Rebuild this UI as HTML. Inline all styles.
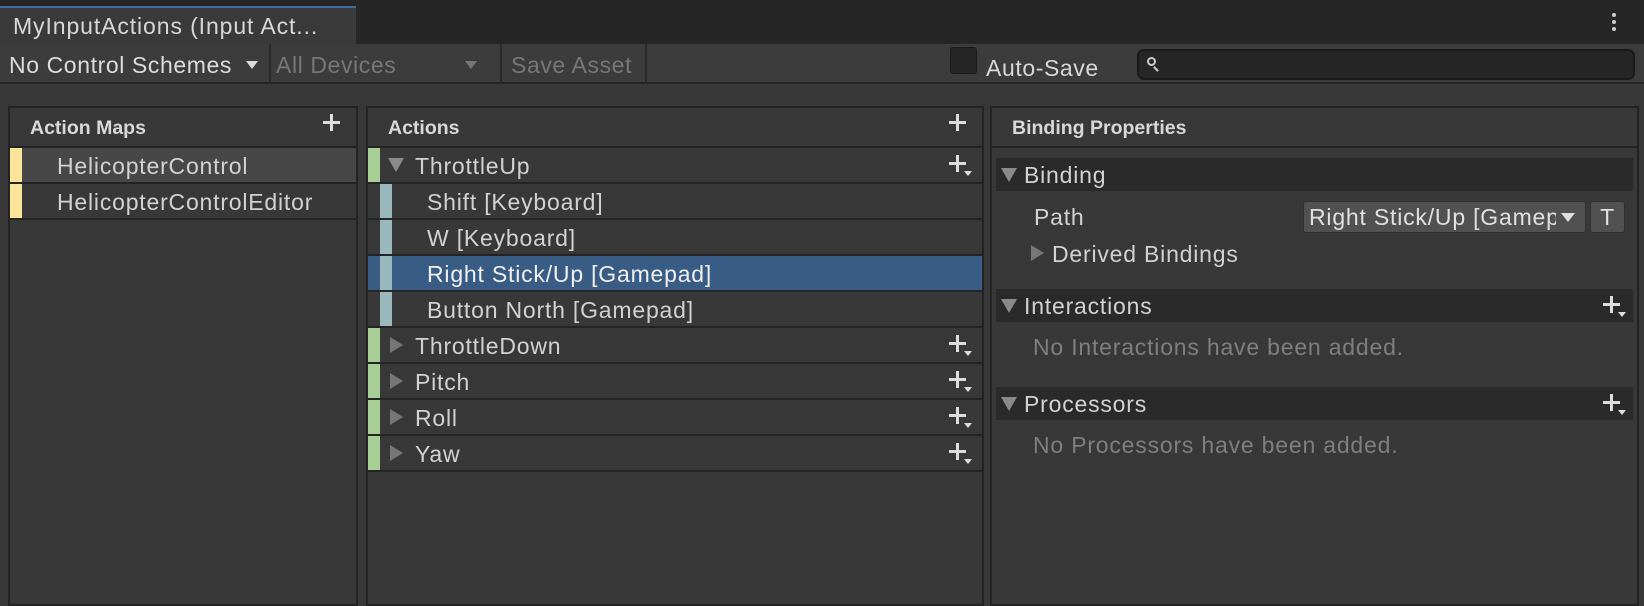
<!DOCTYPE html>
<html><head><style>
*{box-sizing:border-box;margin:0;padding:0}
body{width:1644px;height:596px;background:#383838;font-family:"Liberation Sans",sans-serif;color:#d2d2d2;position:relative;overflow:hidden;font-size:23px;letter-spacing:0.8px}
.a{position:absolute}
.row{position:absolute;height:36px;border-bottom:2px solid #242424;line-height:36px;white-space:nowrap}
.plusd{position:absolute;width:24px;height:24px}
.plusd:before{content:"";position:absolute;left:2px;top:9px;width:17px;height:3px;background:#ddd}
.plusd:after{content:"";position:absolute;left:9px;top:2px;width:3px;height:17px;background:#ddd}
.plusd i{position:absolute;left:17px;top:18px;border-left:4px solid transparent;border-right:4px solid transparent;border-top:5px solid #ddd}
.tri-d{display:inline-block;border-left:8px solid transparent;border-right:8px solid transparent;border-top:14px solid #8a8a8a;vertical-align:middle}
.tri-r{position:absolute;border-top:8px solid transparent;border-bottom:8px solid transparent;border-left:13px solid #777}
.hdr{position:absolute;font-weight:bold;font-size:19.5px;color:#d8d8d8;letter-spacing:0}
.sec{position:absolute;left:996px;width:637px;height:33px;background:#2a2a2a;line-height:35px}
</style></head><body>
<div class="a" style="left:0;top:0;width:1644px;height:44px;background:#262626"></div>
<div class="a" style="left:0;top:6px;width:356px;height:38px;background:#3a3a3a;border-top:2px solid #3c6ea5"></div>
<div class="a" style="left:13px;top:13px;font-size:23px;letter-spacing:0.9px;color:#d8d8d8">MyInputActions (Input Act...</div>
<div class="a" style="left:1612px;top:13px;width:4px;height:4px;background:#ccc;border-radius:2px;box-shadow:0 7px 0 #ccc,0 14px 0 #ccc"></div>
<div class="a" style="left:0;top:44px;width:1644px;height:40px;background:#3c3c3c;border-bottom:2px solid #242424"></div>
<div class="a" style="left:9px;top:52px;font-size:23px;letter-spacing:0.6px;color:#dcdcdc">No Control Schemes</div>
<div class="a" style="left:246px;top:61px;border-left:6px solid transparent;border-right:6px solid transparent;border-top:8px solid #ddd"></div>
<div class="a" style="left:269px;top:44px;width:2px;height:40px;background:#2a2a2a"></div>
<div class="a" style="left:276px;top:52px;font-size:23px;letter-spacing:0.6px;color:#777">All Devices</div>
<div class="a" style="left:465px;top:61px;border-left:6px solid transparent;border-right:6px solid transparent;border-top:8px solid #777"></div>
<div class="a" style="left:500px;top:44px;width:2px;height:40px;background:#2a2a2a"></div>
<div class="a" style="left:511px;top:52px;font-size:23px;letter-spacing:0.6px;color:#777">Save Asset</div>
<div class="a" style="left:645px;top:44px;width:2px;height:40px;background:#2a2a2a"></div>
<div class="a" style="left:950px;top:47px;width:27px;height:27px;background:#262626;border:1px solid #1a1a1a;border-radius:3px"></div>
<div class="a" style="left:986px;top:55px;font-size:23px;letter-spacing:0.6px;color:#d8d8d8">Auto-Save</div>
<div class="a" style="left:1137px;top:49px;width:498px;height:31px;background:#262626;border:2px solid #1a1a1a;border-radius:7px"></div>
<div class="a" style="left:1147px;top:57px;width:9px;height:9px;border:2px solid #ccc;border-radius:50%"></div>
<div class="a" style="left:1155px;top:66px;width:2px;height:6px;background:#ccc;transform:rotate(-45deg)"></div>
<div class="a" style="left:8px;top:106px;width:350px;height:500px;border:2px solid #232323;background:#383838"></div>
<div class="a" style="left:366px;top:106px;width:618px;height:500px;border:2px solid #232323;background:#383838"></div>
<div class="a" style="left:990px;top:106px;width:649px;height:500px;border:2px solid #232323;background:#383838"></div>
<div class="a" style="left:10px;top:146px;width:346px;height:2px;background:#232323"></div>
<div class="a" style="left:368px;top:146px;width:614px;height:2px;background:#232323"></div>
<div class="a" style="left:992px;top:146px;width:645px;height:2px;background:#232323"></div>
<div class="hdr" style="left:30px;top:117px">Action Maps</div>
<div class="hdr" style="left:388px;top:117px">Actions</div>
<div class="hdr" style="left:1012px;top:117px">Binding Properties</div>
<div class="plusd" style="left:321px;top:112px"></div>
<div class="plusd" style="left:947px;top:112px"></div>
<div class="row" style="left:10px;top:148px;width:346px;background:#474747"><div class="a" style="left:0;top:0;width:12px;height:34px;background:#fbe59b"></div><span style="position:absolute;left:47px">HelicopterControl</span></div>
<div class="row" style="left:10px;top:184px;width:346px"><div class="a" style="left:0;top:0;width:12px;height:34px;background:#fbe59b"></div><span style="position:absolute;left:47px">HelicopterControlEditor</span></div>
<div class="row" style="left:368px;top:148px;width:614px"><div class="a" style="left:0;top:0;width:12px;height:34px;background:#a8cf96"></div><span class="tri-d" style="position:absolute;left:20px;top:10px"></span><span style="position:absolute;left:47px">ThrottleUp</span><div class="plusd" style="left:579px;top:5px"><i></i></div></div>
<div class="row" style="left:368px;top:184px;width:614px"><div class="a" style="left:12px;top:0;width:12px;height:34px;background:#9ab9bd"></div><span style="position:absolute;left:59px">Shift [Keyboard]</span></div>
<div class="row" style="left:368px;top:220px;width:614px"><div class="a" style="left:12px;top:0;width:12px;height:34px;background:#9ab9bd"></div><span style="position:absolute;left:59px">W [Keyboard]</span></div>
<div class="row" style="left:368px;top:256px;width:614px;background:#395c84;color:#f0f0f0"><div class="a" style="left:12px;top:0;width:12px;height:34px;background:#9ab9bd"></div><span style="position:absolute;left:59px">Right Stick/Up [Gamepad]</span></div>
<div class="row" style="left:368px;top:292px;width:614px"><div class="a" style="left:12px;top:0;width:12px;height:34px;background:#9ab9bd"></div><span style="position:absolute;left:59px">Button North [Gamepad]</span></div>
<div class="row" style="left:368px;top:328px;width:614px"><div class="a" style="left:0;top:0;width:12px;height:34px;background:#a8cf96"></div><div class="tri-r" style="left:22px;top:9px"></div><span style="position:absolute;left:47px">ThrottleDown</span><div class="plusd" style="left:579px;top:5px"><i></i></div></div>
<div class="row" style="left:368px;top:364px;width:614px"><div class="a" style="left:0;top:0;width:12px;height:34px;background:#a8cf96"></div><div class="tri-r" style="left:22px;top:9px"></div><span style="position:absolute;left:47px">Pitch</span><div class="plusd" style="left:579px;top:5px"><i></i></div></div>
<div class="row" style="left:368px;top:400px;width:614px"><div class="a" style="left:0;top:0;width:12px;height:34px;background:#a8cf96"></div><div class="tri-r" style="left:22px;top:9px"></div><span style="position:absolute;left:47px">Roll</span><div class="plusd" style="left:579px;top:5px"><i></i></div></div>
<div class="row" style="left:368px;top:436px;width:614px"><div class="a" style="left:0;top:0;width:12px;height:34px;background:#a8cf96"></div><div class="tri-r" style="left:22px;top:9px"></div><span style="position:absolute;left:47px">Yaw</span><div class="plusd" style="left:579px;top:5px"><i></i></div></div>
<div class="sec" style="top:158px"><span class="tri-d" style="position:absolute;left:5px;top:10px"></span><span style="position:absolute;left:28px">Binding</span></div>
<div class="a" style="left:1034px;top:204px">Path</div>
<div class="a" style="left:1303px;top:201px;width:283px;height:32px;background:#515151;border:1px solid #303030;border-radius:3px"></div>
<div class="a" style="left:1309px;top:202px;width:247px;height:30px;line-height:30px;overflow:hidden;white-space:nowrap;color:#e0e0e0">Right Stick/Up [Gamepad]</div>
<div class="a" style="left:1561px;top:213px;border-left:7px solid transparent;border-right:7px solid transparent;border-top:9px solid #ddd"></div>
<div class="a" style="left:1590px;top:201px;width:35px;height:32px;background:#515151;border:1px solid #303030;border-radius:3px;line-height:30px;text-align:center;color:#e0e0e0">T</div>
<div class="tri-r" style="left:1031px;top:245px"></div>
<div class="a" style="left:1052px;top:241px">Derived Bindings</div>
<div class="sec" style="top:289px"><span class="tri-d" style="position:absolute;left:5px;top:10px"></span><span style="position:absolute;left:28px">Interactions</span><div class="plusd" style="left:605px;top:5px"><i></i></div></div>
<div class="a" style="left:1033px;top:334px;color:#7f7f7f">No Interactions have been added.</div>
<div class="sec" style="top:387px"><span class="tri-d" style="position:absolute;left:5px;top:10px"></span><span style="position:absolute;left:28px">Processors</span><div class="plusd" style="left:605px;top:5px"><i></i></div></div>
<div class="a" style="left:1033px;top:432px;color:#7f7f7f">No Processors have been added.</div>
</body></html>
